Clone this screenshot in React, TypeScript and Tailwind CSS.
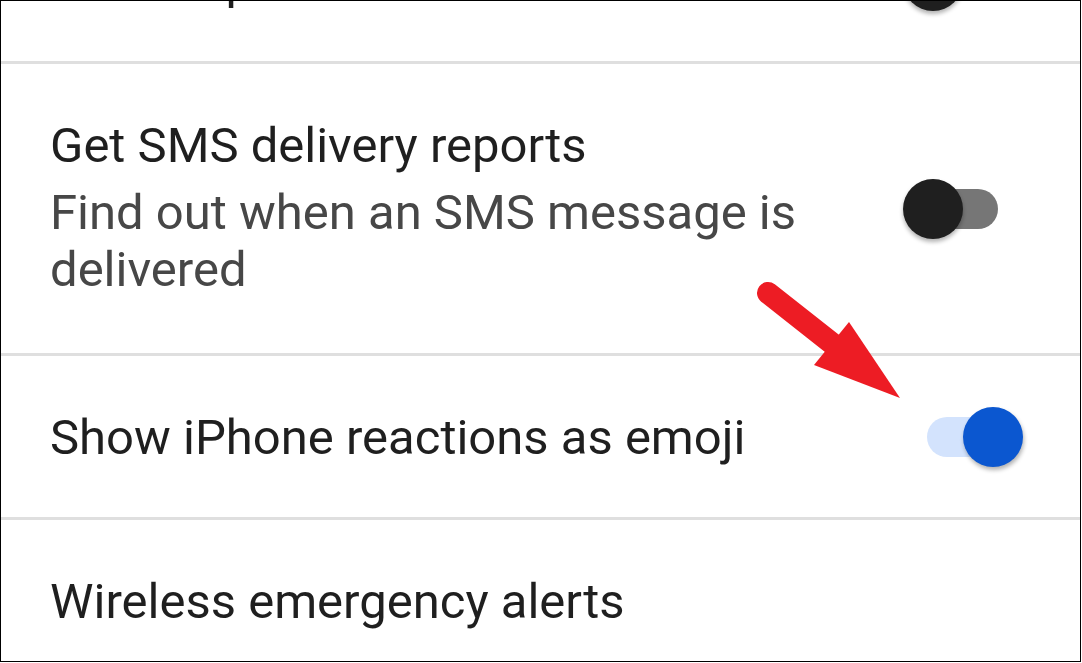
type Row = {
  title: string;
  summary?: string;
  checked?: boolean;
  height: string;
};

const rows: Row[] = [
  { title: "Use simple characters", checked: false, height: "h-[161px] -mt-[101px]" },
  {
    title: "Get SMS delivery reports",
    summary: "Find out when an SMS message is delivered",
    checked: false,
    height: "h-[289px]",
  },
  { title: "Show iPhone reactions as emoji", checked: true, height: "h-[161px]" },
  { title: "Wireless emergency alerts", height: "h-[161px]" },
];

function Switch({ checked }: { checked: boolean }) {
  return (
    <div className="relative h-[60px] w-[120px] shrink-0">
      <div
        className={
          checked
            ? "absolute left-[24px] top-[10px] h-[40px] w-[71px] rounded-full bg-[#d3e3fd]"
            : "absolute left-[24px] top-[10px] h-[40px] w-[71px] rounded-full bg-[#767676]"
        }
      />
      <div
        className={
          checked
            ? "absolute left-[60px] top-0 h-[60px] w-[60px] rounded-full bg-[#0b57d0] shadow-[1px_3px_4px_rgba(0,0,0,0.3)]"
            : "absolute left-0 top-0 h-[60px] w-[60px] rounded-full bg-[#1f1f1f] shadow-[0_3px_4px_rgba(0,0,0,0.3)]"
        }
      />
    </div>
  );
}

function SettingRow({ row }: { row: Row }) {
  return (
    <div className={`flex shrink-0 pl-[49px] pr-[57px] ${row.height}`}>
      <div className="flex-1 pt-[53px]">
        <div className="text-[49px] leading-[58px] text-[#1f1f1f]">{row.title}</div>
        {row.summary && (
          <div className="mt-[9px] text-[49px] leading-[57px] text-[#474747]">{row.summary}</div>
        )}
      </div>
      {row.checked !== undefined && (
        <div className="flex items-center">
          <Switch checked={row.checked} />
        </div>
      )}
    </div>
  );
}

export default function App() {
  return (
    <div className="h-[663px] w-[1082px] bg-white">
      <div
        className="relative flex h-[662px] w-[1081px] flex-col overflow-hidden border border-black bg-white"
        style={{ fontFamily: "Roboto, 'Noto Sans', sans-serif" }}
      >
        {rows.map((row, i) => (
          <div key={row.title} className="contents">
            {i > 0 && <div className="h-[3px] shrink-0 bg-[#dfdfdf]" />}
            <SettingRow row={row} />
          </div>
        ))}

        {/* callout arrow */}
        <svg
          className="pointer-events-none absolute left-0 top-0"
          width="1080"
          height="661"
          viewBox="1 1 1080 661"
        >
          <line x1="768" y1="293" x2="834" y2="345" stroke="#ed1c24" strokeWidth="22" strokeLinecap="round" />
          <polygon points="849,322 814,365 900,398" fill="#ed1c24" />
        </svg>
      </div>
    </div>
  );
}
